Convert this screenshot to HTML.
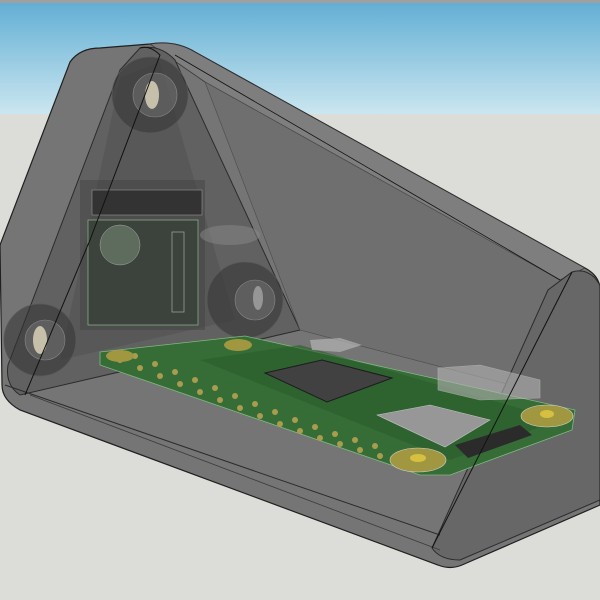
<!DOCTYPE html>
<html><head><meta charset="utf-8"><style>
html,body{margin:0;padding:0;width:600px;height:600px;overflow:hidden;background:#dcdcd8}
</style></head><body>
<svg width="600" height="600" viewBox="0 0 600 600" xmlns="http://www.w3.org/2000/svg">
<defs>
<linearGradient id="sky" x1="0" y1="0" x2="0" y2="1">
<stop offset="0" stop-color="#62afd4"/><stop offset="1" stop-color="#cbe6f0"/>
</linearGradient>
</defs>
<rect x="0" y="0" width="600" height="600" fill="#dcdcd8"/>
<rect x="0" y="3" width="600" height="111" fill="url(#sky)"/>
<rect x="0" y="0" width="600" height="3" fill="#a0a0a0"/>
<path d="M70,62 Q80,48 100,48 L150,44 Q175,40 195,52 L585,268 Q600,276 600,290 L600,505 L462,565 Q450,570 438,565 L20,410 Q2,400 2,385 L0,245 Z" fill="#747474" stroke="#222" stroke-width="1.2"/>
<path d="M150,44 Q175,40 195,52 L585,268 L560,280 L205,82 Z" fill="#7e7e7e" stroke="#333" stroke-width="0.8"/>
<path d="M140,48 Q160,44 175,60 L300,330 L20,395 Q5,385 8,365 L120,70 Z" fill="#5e5e5e" stroke="#222" stroke-width="1"/>
<path d="M120,78 L160,62 L235,320 L60,360 Z" fill="#4e4e4e" opacity="0.6"/>
<path d="M205,82 L560,280 L530,390 L300,330 Z" fill="#6e6e6e" stroke="#444" stroke-width="0.6"/>
<path d="M572,272 Q585,268 595,278 L600,285 L600,500 L460,560 Q440,560 432,548 L548,290 Z" fill="#656565" stroke="#222" stroke-width="1"/>
<path d="M5,385 L440,535" stroke="#222" stroke-width="1" fill="none"/>
<path d="M30,395 L440,550" stroke="#333" stroke-width="0.8" fill="none"/>
<rect x="80" y="180" width="125" height="150" fill="#3b3b3b" opacity="0.5"/>
<rect x="92" y="190" width="110" height="25" fill="#2a2a2a" stroke="#999" stroke-width="0.6"/>
<rect x="88" y="220" width="110" height="105" fill="#353c35" stroke="#8fbf8f" stroke-width="0.7"/>
<circle cx="120" cy="245" r="20" fill="#5a6a5a" stroke="#aaa" stroke-width="0.5"/>
<rect x="172" y="232" width="12" height="80" fill="none" stroke="#aaa" stroke-width="0.7"/>
<g fill="#2a2a2a" fill-opacity="0.55" stroke="#555" stroke-width="0.8">
<circle cx="150" cy="95" r="38"/><circle cx="40" cy="340" r="36"/><circle cx="245" cy="300" r="38"/>
</g>
<g fill="#6a6a6a" fill-opacity="0.6" stroke="#888" stroke-width="0.6">
<circle cx="155" cy="95" r="22"/><circle cx="45" cy="340" r="20"/><circle cx="255" cy="300" r="20"/>
</g>
<ellipse cx="152" cy="95" rx="7" ry="14" fill="#cfc7b0"/>
<ellipse cx="40" cy="340" rx="7" ry="14" fill="#cfc7b0"/>
<ellipse cx="258" cy="298" rx="5" ry="12" fill="#999"/>
<ellipse cx="230" cy="235" rx="30" ry="10" fill="#8a8a8a" opacity="0.5"/>
<path d="M100,352 L245,336 L575,410 L572,430 L450,475 L420,475 L100,365 Z" fill="#2e6a2e" stroke="#7fc07f" stroke-width="0.8"/>
<path d="M200,360 L300,345 L560,420 L450,460 Z" fill="#1f5a22" opacity="0.6"/>
<g fill="#b0a04a">
<circle cx="120" cy="360" r="3"/><circle cx="140" cy="368" r="3"/><circle cx="160" cy="376" r="3"/><circle cx="180" cy="384" r="3"/><circle cx="200" cy="392" r="3"/><circle cx="220" cy="400" r="3"/><circle cx="240" cy="408" r="3"/><circle cx="260" cy="416" r="3"/><circle cx="280" cy="424" r="3"/><circle cx="300" cy="431" r="3"/><circle cx="320" cy="438" r="3"/><circle cx="340" cy="444" r="3"/><circle cx="360" cy="450" r="3"/><circle cx="380" cy="456" r="3"/>
<circle cx="135" cy="356" r="3"/><circle cx="155" cy="364" r="3"/><circle cx="175" cy="372" r="3"/><circle cx="195" cy="380" r="3"/><circle cx="215" cy="388" r="3"/><circle cx="235" cy="396" r="3"/><circle cx="255" cy="404" r="3"/><circle cx="275" cy="412" r="3"/><circle cx="295" cy="420" r="3"/><circle cx="315" cy="427" r="3"/><circle cx="335" cy="434" r="3"/><circle cx="355" cy="440" r="3"/><circle cx="375" cy="446" r="3"/>
</g>
<path d="M265,373 L322,360 L392,378 L327,402 Z" fill="#3a3a3a" stroke="#111" stroke-width="1"/>
<path d="M377,415 L430,405 L490,420 L445,447 Z" fill="#9a9a9a" stroke="#ccc" stroke-width="0.6"/>
<path d="M438,368 L480,365 L540,380 L540,398 L480,400 L438,390 Z" fill="#b8b8b8" opacity="0.6" stroke="#ddd" stroke-width="0.6"/>
<path d="M310,340 L340,338 L362,345 L340,352 L312,350 Z" fill="#bbb" opacity="0.7"/>
<path d="M455,445 L520,425 L532,435 L468,458 Z" fill="#222"/>
<ellipse cx="418" cy="460" rx="28" ry="12" fill="#a69a3a" stroke="#ddd" stroke-width="0.6"/>
<ellipse cx="418" cy="458" rx="8" ry="4" fill="#e0c838"/>
<ellipse cx="547" cy="416" rx="26" ry="11" fill="#a69a3a" stroke="#ddd" stroke-width="0.6"/>
<ellipse cx="547" cy="414" rx="7" ry="4" fill="#e0c838"/>
<ellipse cx="120" cy="356" rx="14" ry="6" fill="#a69a3a"/>
<ellipse cx="238" cy="345" rx="14" ry="6" fill="#a69a3a"/>
<path d="M70,62 Q80,48 100,48 L150,44 Q175,40 195,52 L585,268 Q600,276 600,290 L600,505 L462,565 Q450,570 438,565 L20,410 Q2,400 2,385 L0,245 Z" fill="#808080" opacity="0.1" stroke="#111" stroke-width="1.2"/>
<path d="M140,48 Q150,45 160,55 L90,240 L25,395" stroke="#111" stroke-width="1" fill="none"/>
<path d="M572,272 L432,548" stroke="#111" stroke-width="1" fill="none"/>
<path d="M175,55 L560,280" stroke="#111" stroke-width="0.8" fill="none"/>
</svg>
</body></html>
